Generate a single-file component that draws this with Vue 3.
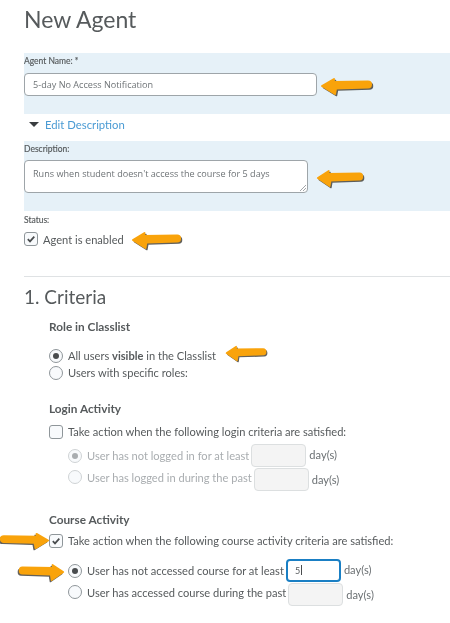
<script setup>
const arrows = [
  { x: 320, y: 77, w: 54, h: 20, flip: false },
  { x: 316, y: 169, w: 49, h: 20, flip: false },
  { x: 131, y: 231, w: 52, h: 20, flip: false },
  { x: 225, y: 345, w: 43, h: 18, flip: false },
  { x: -2, y: 532, w: 52, h: 19, flip: true },
  { x: 17, y: 563, w: 48, h: 20, flip: true }
]

const arrowPath = 'M2 9 14 2 13.5 5 48 4.5C52 4.5 52 10.5 48 10.5L16 11.5 15 17Z'
</script>

<template>
  <div class="page">
    <h1 class="title">New Agent</h1>

    <div class="band name-band">
      <div class="small-label">Agent Name: *</div>
      <div class="text-box name-box">5-day No Access Notification</div>
    </div>

    <div class="edit-link">
      <span class="triangle"></span>
      <span>Edit Description</span>
    </div>

    <div class="band desc-band">
      <div class="small-label">Description:</div>
      <div class="text-box desc-box">
        Runs when student doesn't access the course for 5 days
        <svg class="grip" width="8" height="8" viewBox="0 0 8 8">
          <path d="M1 7 7 1M4 7 7 4" stroke="#8a8f94" stroke-width="0.8" fill="none" />
        </svg>
      </div>
    </div>

    <div class="small-label status-label">Status:</div>
    <div class="row status-row">
      <span class="check on">
        <svg width="10" height="10" viewBox="0 0 10 10">
          <path d="M1.8 5.2 4 7.4 8.3 2.6" stroke="#494c4e" stroke-width="1.7" fill="none" />
        </svg>
      </span>
      <span>Agent is enabled</span>
    </div>

    <hr class="rule" />
    <h2 class="section">1. Criteria</h2>

    <div class="criteria">
      <h3 class="group first">Role in Classlist</h3>
      <div class="row opt-a"><span class="radio on"></span><span>All users <b>visible</b> in the Classlist</span></div>
      <div class="row opt-b"><span class="radio"></span><span>Users with specific roles:</span></div>

      <h3 class="group login">Login Activity</h3>
      <div class="row take"><span class="check"></span><span>Take action when the following login criteria are satisfied:</span></div>
      <div class="sub muted">
        <div class="row day-row">
          <span class="radio on"></span>
          <span class="opt-label">User has not logged in for at least</span>
          <span class="days-box"></span>
          <span class="days">day(s)</span>
        </div>
        <div class="row day-row second">
          <span class="radio"></span>
          <span class="opt-label">User has logged in during the past</span>
          <span class="days-box"></span>
          <span class="days">day(s)</span>
        </div>
      </div>

      <h3 class="group course">Course Activity</h3>
      <div class="row take course-take">
        <span class="check on">
          <svg width="10" height="10" viewBox="0 0 10 10">
            <path d="M1.8 5.2 4 7.4 8.3 2.6" stroke="#494c4e" stroke-width="1.7" fill="none" />
          </svg>
        </span>
        <span>Take action when the following course activity criteria are satisfied:</span>
      </div>
      <div class="sub course-sub">
        <div class="row day-row">
          <span class="radio on"></span>
          <span class="opt-label">User has not accessed course for at least</span>
          <span class="days-box focus">5<i class="caret"></i></span>
          <span class="days">day(s)</span>
        </div>
        <div class="row day-row second">
          <span class="radio"></span>
          <span class="opt-label">User has accessed course during the past</span>
          <span class="days-box"></span>
          <span class="days">day(s)</span>
        </div>
      </div>
    </div>

    <svg
      v-for="(a, i) in arrows"
      :key="i"
      class="arrow"
      :class="{ flip: a.flip }"
      :style="{ left: a.x + 'px', top: a.y + 'px', width: a.w + 'px', height: a.h + 'px' }"
      viewBox="0 0 54 20"
      preserveAspectRatio="none"
    >
      <path :d="arrowPath" class="arrow-shadow" transform="translate(1.5 1.5)" />
      <path :d="arrowPath" class="arrow-body" />
    </svg>
  </div>
</template>

<style scoped>
.page {
  position: relative;
  width: 450px;
  height: 623px;
  overflow: hidden;
  background: #fff;
  color: #565a5c;
  font-family: Lato, "Open Sans", sans-serif;
  font-size: 11.1px;
  filter: blur(0.3px);
}

.title {
  margin: 0;
  padding: 4px 0 0 24px;
  height: 53px;
  box-sizing: border-box;
  font-size: 23px;
  line-height: 30px;
  font-weight: 400;
}

.band {
  margin-left: 24px;
  background: #e6f1f8;
}

.name-band {
  height: 61px;
}

.desc-band {
  height: 70px;
}

.small-label {
  font-size: 8.5px;
  line-height: 12px;
  padding-top: 2px;
  -webkit-text-stroke: 0.15px #565a5c;
}

.text-box {
  box-sizing: border-box;
  background: #fff;
  border: 1px solid #9ea5a9;
  border-radius: 4px;
  padding-left: 8px;
  font-family: "Open Sans", Lato, sans-serif;
  font-size: 9.1px;
  color: #6e7376;
}

.name-box {
  width: 293px;
  height: 23px;
  margin-top: 6px;
  line-height: 21px;
}

.desc-box {
  position: relative;
  width: 284px;
  height: 33px;
  margin-top: 5px;
  line-height: 25px;
}

.grip {
  position: absolute;
  right: 0;
  bottom: 0;
}

.edit-link {
  display: flex;
  align-items: center;
  box-sizing: border-box;
  height: 27px;
  padding: 0 0 7px 29px;
  gap: 6px;
  font-size: 11.3px;
  color: #4a9bd4;
}

.triangle {
  width: 0;
  height: 0;
  border-left: 5px solid transparent;
  border-right: 5px solid transparent;
  border-top: 5px solid #3a3d40;
}

.status-label {
  margin: 1px 0 0 24px;
}

.row {
  display: flex;
  align-items: center;
}

.status-row {
  height: 16px;
  margin: 5px 0 0 24px;
  gap: 5px;
}

.rule {
  height: 1px;
  margin: 29px 0 0 24px;
  border: 0;
  background: #dfe2e4;
}

.section {
  margin: 9px 0 0 24px;
  font-size: 19px;
  line-height: 22px;
  font-weight: 400;
}

.criteria {
  padding-left: 49px;
}

.group {
  margin: 0;
  font-size: 11.8px;
  line-height: 16px;
  font-weight: 700;
}

.group.first {
  margin-top: 11px;
}

.group.login {
  margin-top: 20px;
}

.group.course {
  margin-top: 21px;
}

.opt-a,
.opt-b,
.take {
  gap: 5px;
  height: 17px;
}

.opt-a {
  margin-top: 12px;
}

.take {
  margin-top: 6px;
}

.course-take {
  margin-top: 4px;
}

.sub {
  margin-left: 19px;
  margin-top: 4px;
}

.course-sub {
  margin-top: 10px;
}

.muted {
  color: #a9adb0;
}

.day-row {
  height: 23px;
  gap: 5px;
}

.day-row .days-box {
  margin-left: -3px;
}

.day-row.second {
  height: 24px;
}

.day-row.second .radio,
.day-row.second .opt-label {
  margin-bottom: 4px;
}

.days {
  margin: 0 0 2px -2px;
  color: #6b7073;
}

.second .days {
  margin-bottom: 0;
}

.days-box {
  box-sizing: border-box;
  width: 55px;
  height: 23px;
  background: #f4f4f4;
  border: 1px solid #dcdfe0;
  border-radius: 4px;
}

.days-box.focus {
  padding-left: 7px;
  background: #fff;
  border: 2px solid #1a7fc4;
  font-size: 9px;
  line-height: 19px;
}

.caret {
  display: inline-block;
  width: 1px;
  height: 10px;
  margin-left: 1px;
  vertical-align: -1px;
  background: #494c4e;
}

.check,
.radio {
  flex: none;
  box-sizing: border-box;
  width: 14px;
  height: 14px;
  border: 1px solid #8f969a;
  background: #f8fafc;
}

.check {
  display: flex;
  align-items: center;
  justify-content: center;
  border-radius: 3px;
}

.radio {
  display: flex;
  align-items: center;
  justify-content: center;
  border-radius: 50%;
}

.radio.on::after {
  content: "";
  width: 6px;
  height: 6px;
  border-radius: 50%;
  background: #494c4e;
}

.muted .radio {
  border-color: #cfd3d5;
}

.muted .radio.on::after {
  background: #a9adb0;
}

.arrow {
  position: absolute;
}

.arrow.flip {
  transform: scaleX(-1);
}

.arrow-shadow {
  fill: #3d3a33;
  stroke: #3d3a33;
  stroke-width: 1.5;
  stroke-linejoin: round;
  opacity: 0.8;
}

.arrow-body {
  fill: #f9a30b;
  stroke: #f9a30b;
  stroke-width: 2;
  stroke-linejoin: round;
}
</style>
